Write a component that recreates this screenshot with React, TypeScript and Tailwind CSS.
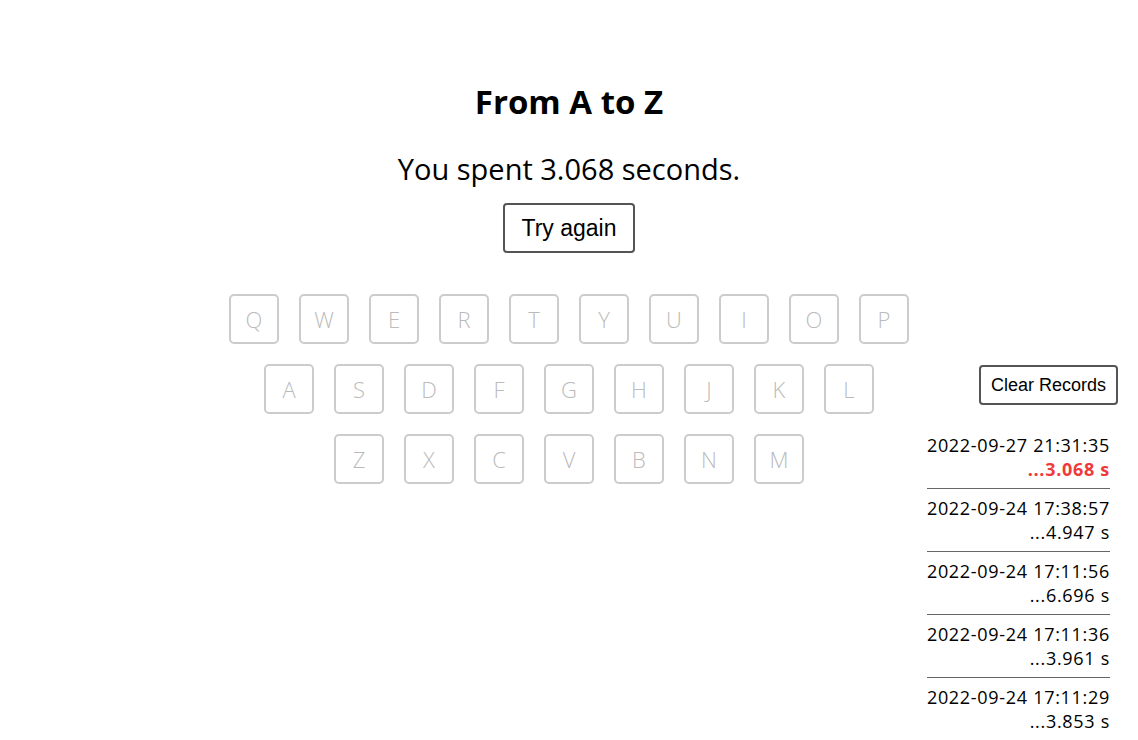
import React from 'react';

const rows = ['QWERTYUIOP', 'ASDFGHJKL', 'ZXCVBNM'];

const records = [
  { at: '2022-09-27 21:31:35', time: '3.068', latest: true },
  { at: '2022-09-24 17:38:57', time: '4.947' },
  { at: '2022-09-24 17:11:56', time: '6.696' },
  { at: '2022-09-24 17:11:36', time: '3.961' },
  { at: '2022-09-24 17:11:29', time: '3.853' },
];

function Key({ letter }: { letter: string }) {
  return (
    <div className="flex h-[50px] w-[50px] items-center justify-center rounded-[5px] border-2 border-[#cccccc] text-[22px] font-light text-[#bbbbbb]">
      {letter}
    </div>
  );
}

export default function App() {
  return (
    <div
      className="grid min-h-screen grid-cols-[1fr_auto_1fr] bg-white text-black"
      style={{ fontFamily: '"Open Sans", "Noto Sans", sans-serif' }}
    >
      <div />

      {/* Game */}
      <main className="flex flex-col items-center">
        <h1 className="mt-[80px] text-[33px] font-bold leading-[44px]">From A to Z</h1>
        <p className="mt-[27px] text-[29px] leading-[36px]">You spent 3.068 seconds.</p>
        <button
          className="mt-[16px] h-[50px] rounded-[4px] border-2 border-[#555555] bg-white px-[16px] text-[23px]"
          style={{ fontFamily: '"Liberation Sans", Arial, sans-serif' }}
        >
          Try again
        </button>

        <div className="mt-[41px] flex flex-col items-center gap-[20px]">
          {rows.map((row) => (
            <div key={row} className="flex gap-[20px]">
              {row.split('').map((l) => (
                <Key key={l} letter={l} />
              ))}
            </div>
          ))}
        </div>
      </main>

      {/* Records */}
      <aside className="flex flex-col items-end pr-[20px] pt-[365px]">
        <button
          className="h-[40px] rounded-[4px] border-2 border-[#555555] bg-white px-[10px] text-[18px]"
          style={{ fontFamily: '"Liberation Sans", Arial, sans-serif' }}
        >
          Clear Records
        </button>
        <ul className="mr-[8px] mt-[21px] flex flex-col">
          {records.map((r) => (
            <li
              key={r.at}
              className="border-b border-[#666666] py-[7px] text-right text-[18px] leading-[24px] tracking-[0.7px]"
            >
              <div>{r.at}</div>
              <div className={r.latest ? 'font-bold text-[#f03a3a]' : ''}>...{r.time} s</div>
            </li>
          ))}
        </ul>
      </aside>
    </div>
  );
}
